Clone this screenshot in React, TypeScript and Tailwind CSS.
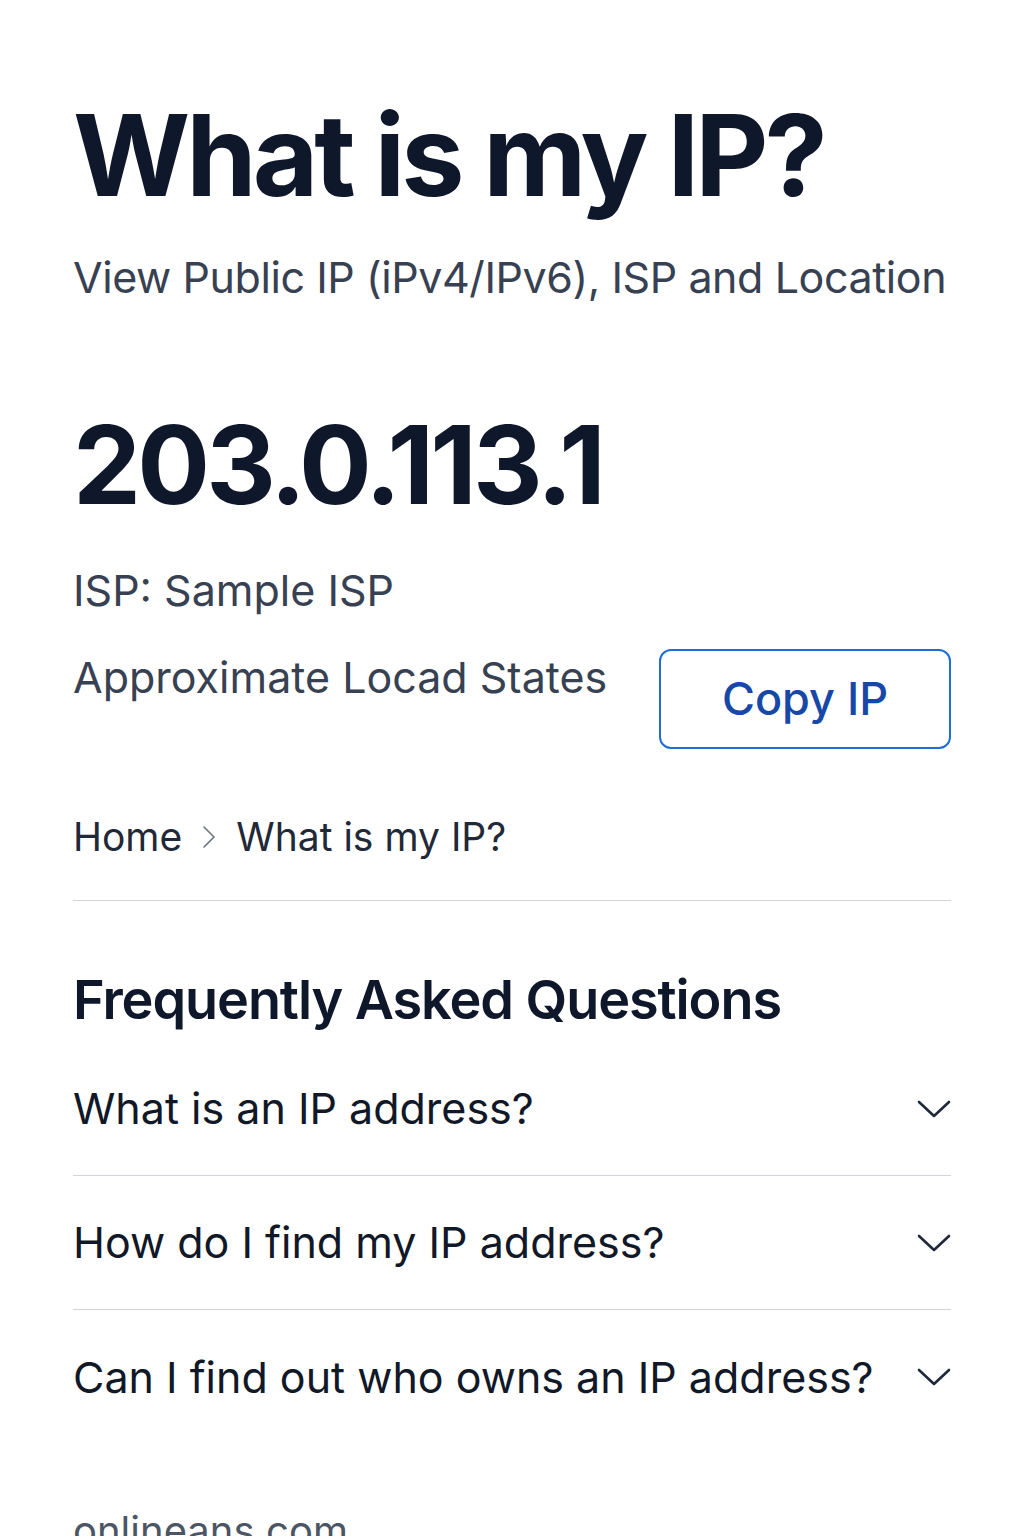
const faqs = [
  "What is an IP address?",
  "How do I find my IP address?",
  "Can I find out who owns an IP address?",
];

function ChevronDown() {
  return (
    <svg width="34" height="20" viewBox="0 0 34 20" fill="none" className="shrink-0">
      <polyline
        points="2,3 17,17 32,3"
        stroke="#1e293b"
        strokeWidth="2.6"
        strokeLinecap="round"
        strokeLinejoin="round"
      />
    </svg>
  );
}

function ChevronRight() {
  return (
    <svg width="14" height="26" viewBox="0 0 14 26" fill="none">
      <polyline
        points="2,3 12,13 2,23"
        stroke="#6b7280"
        strokeWidth="1.6"
        strokeLinecap="round"
        strokeLinejoin="round"
      />
    </svg>
  );
}

export default function App() {
  return (
    <div
      className="min-h-[1536px] bg-white text-[#111827]"
      style={{ fontFamily: "Inter, 'Noto Sans', sans-serif" }}
    >
      <main className="mx-[73px] pt-[99px]">
        <h1 className="whitespace-nowrap text-[113px] font-bold leading-none tracking-[-0.035em] text-[#0f172a]">
          What is my IP?
        </h1>
        <p className="mt-[44px] whitespace-nowrap text-[43px] leading-none tracking-[-0.01em] text-[#374151]">
          View Public IP (iPv4/IPv6), ISP and Location
        </p>

        <p className="mt-[112px] text-[108px] font-bold leading-none tracking-[-0.035em] text-[#0f172a]">
          203.0.113.1
        </p>
        <p className="mt-[50px] text-[43px] leading-none text-[#374151]">
          ISP: Sample ISP
        </p>

        <div className="mt-[37px] flex items-start justify-between">
          <p className="mt-[7px] text-[43px] leading-none text-[#374151]">
            Approximate Locad States
          </p>
          <button className="flex h-[100px] w-[292px] items-center justify-center rounded-[12px] border-2 border-[#1d6fd6] bg-white text-[45px] font-medium text-[#1748a8]">
            Copy IP
          </button>
        </div>

        <nav className="mt-[68px] flex items-center gap-[20px] text-[39px] leading-none text-[#1f2937]">
          <span>Home</span>
          <ChevronRight />
          <span>What is my IP?</span>
        </nav>

        <hr className="mt-[44px] border-0 border-t border-[#d1d5db]" />

        <h2 className="mt-[72px] whitespace-nowrap text-[54px] font-semibold leading-none tracking-[-0.02em] text-[#0f172a]">
          Frequently Asked Questions
        </h2>

        <div className="mt-[15px]">
          {faqs.map((q, i) => (
            <div
              key={q}
              className={
                i < faqs.length - 1
                  ? "flex h-[134px] items-center justify-between border-b border-[#d1d5db]"
                  : "flex h-[134px] items-center justify-between"
              }
            >
              <span className="whitespace-nowrap text-[43px] leading-none text-[#111827]">{q}</span>
              <ChevronDown />
            </div>
          ))}
        </div>

        <footer className="mt-[67px] pb-10 text-[40px] leading-none text-[#4b5563]">
          onlineans.com
        </footer>
      </main>
    </div>
  );
}
